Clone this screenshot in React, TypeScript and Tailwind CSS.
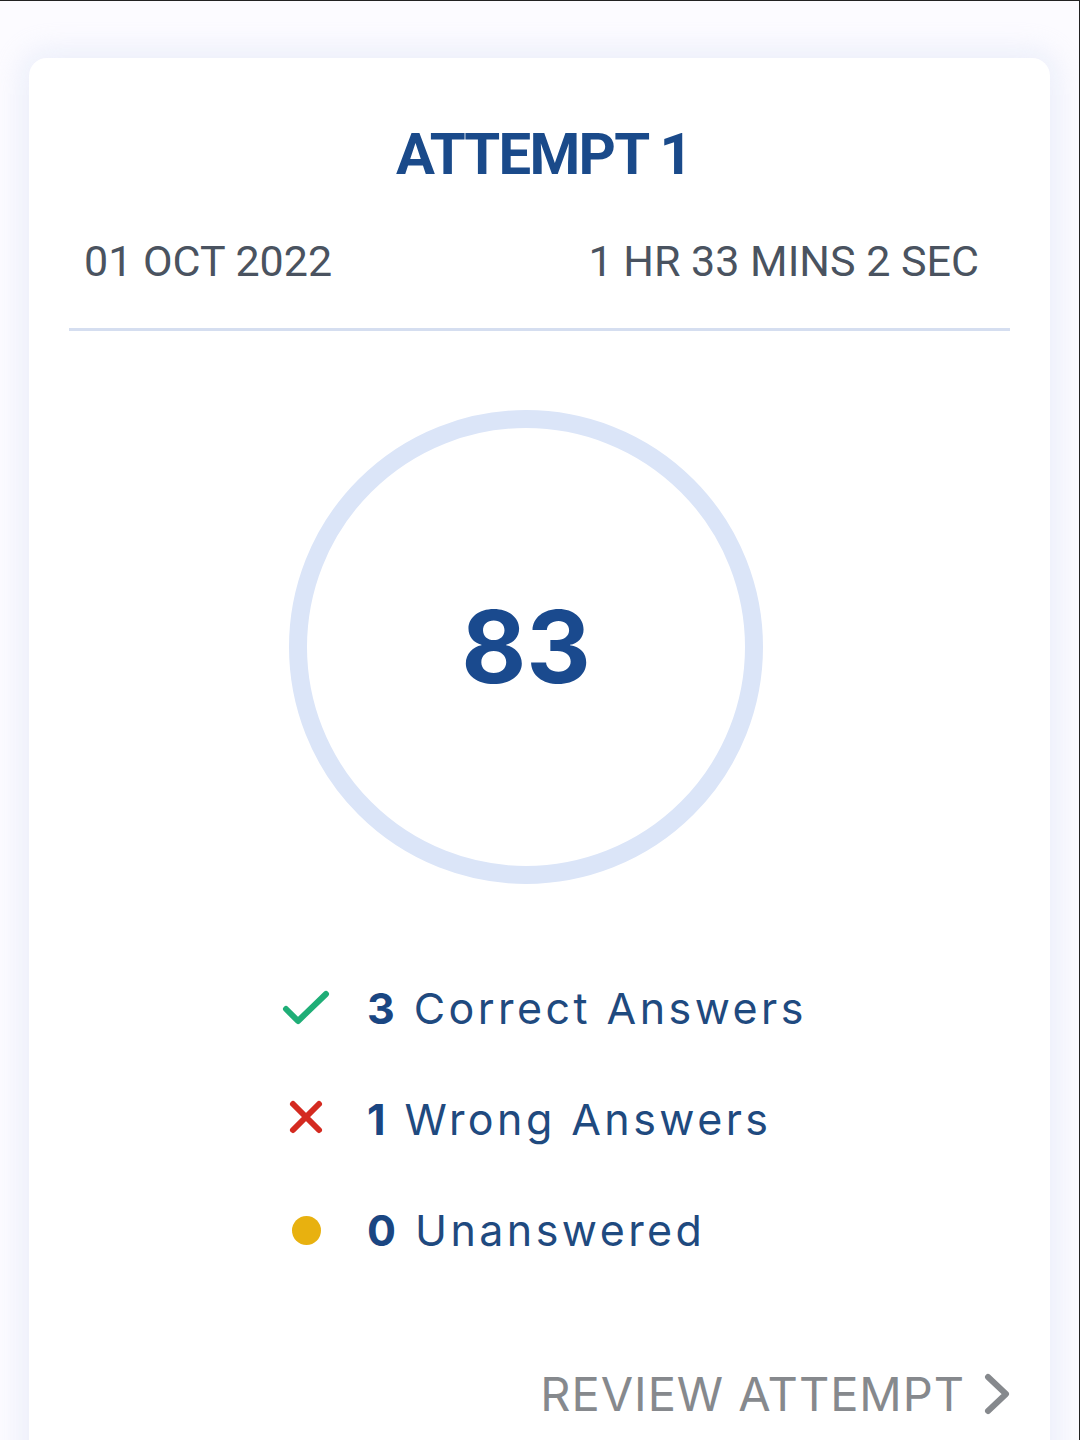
const stats = [
  { kind: 'correct', count: 3, label: 'Correct Answers' },
  { kind: 'wrong', count: 1, label: 'Wrong Answers' },
  { kind: 'skipped', count: 0, label: 'Unanswered' },
];

function StatIcon({ kind }: { kind: string }) {
  if (kind === 'correct') {
    return (
      <svg width="50" height="40" viewBox="0 0 50 40" fill="none">
        <path d="M5 21 L17 33 L45 6" stroke="#1fae77" strokeWidth="6" strokeLinecap="round" strokeLinejoin="round" />
      </svg>
    );
  }
  if (kind === 'wrong') {
    return (
      <svg width="50" height="40" viewBox="0 0 50 40" fill="none">
        <path d="M12 5 L38 31 M38 5 L12 31" stroke="#d42a20" strokeWidth="6" strokeLinecap="round" />
      </svg>
    );
  }
  return (
    <div className="w-[50px] h-[40px] flex items-center justify-center">
      <div className="w-[29px] h-[29px] rounded-full bg-[#e8b10f]" />
    </div>
  );
}

export default function App() {
  return (
    <div className="w-[1080px] h-[1440px] overflow-hidden bg-[#fcfbff] border-t border-r border-[#222]">
      <div className="mt-[57px] mx-[29px] h-[1500px] rounded-[18px] bg-white shadow-[0_0_28px_8px_rgba(215,225,245,0.45)] px-[40px]">
        <h1 className="pt-[66px] pl-[8px] text-center font-['Roboto',sans-serif] font-bold text-[58px] leading-[60px] tracking-[-0.03em] text-[#1a4a8a]">
          ATTEMPT 1
        </h1>

        <div className="mt-[52px] flex justify-between pl-[15px] pr-[31px] font-['Roboto',sans-serif] text-[43px] leading-[50px] text-[#4a5360]">
          <span>01 OCT 2022</span>
          <span>1 HR 33 MINS 2 SEC</span>
        </div>

        <div className="mt-[42px] h-[3px] bg-[#d5def0]" />

        <div className="mt-[79px] ml-[220px] w-[474px] h-[474px] rounded-full border-[18px] border-[#dbe5f8] flex items-center justify-center">
          <span className="font-['Inter',sans-serif] font-bold text-[100px] leading-none text-[#1a4a8e]">83</span>
        </div>

        <div className="mt-[99px] ml-[212px] flex flex-col gap-[61px] font-['Inter',sans-serif]">
          {stats.map((s) => (
            <div key={s.kind} className="flex items-center h-[50px]">
              <StatIcon kind={s.kind} />
              <span className="ml-[36px] text-[43px] leading-[50px] tracking-[0.08em] text-[#1f4a7f]">
                <span className="font-bold text-[#1a4682]">{s.count}</span> {s.label}
              </span>
            </div>
          ))}
        </div>

        <div className="mt-[114px] flex justify-end items-center h-[50px] font-['Inter',sans-serif] text-[47px] leading-[50px] tracking-[0.02em] text-[#86898d]">
          <span>REVIEW ATTEMPT</span>
          <svg className="ml-[19px]" width="26" height="42" viewBox="0 0 26 42" fill="none">
            <path d="M4 4 L22 21 L4 38" stroke="#86898d" strokeWidth="6" strokeLinecap="round" strokeLinejoin="round" />
          </svg>
        </div>
      </div>
    </div>
  );
}
